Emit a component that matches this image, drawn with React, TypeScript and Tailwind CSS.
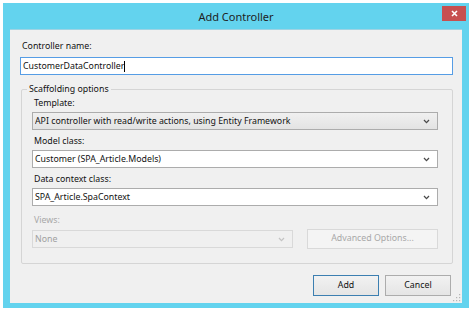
import React from 'react';

const font = { fontFamily: '"Noto Sans", "Open Sans", sans-serif' };

function Chevron({ disabled }: { disabled?: boolean }) {
  return (
    <svg width="7" height="5" viewBox="0 0 7 5" className="shrink-0">
      <path
        d="M1 1 L3.5 3.6 L6 1"
        fill="none"
        stroke={disabled ? '#c4c4c4' : '#4a4a4a'}
        strokeWidth="1.3"
      />
    </svg>
  );
}

function Select({
  value,
  variant = 'white',
  className = '',
}: {
  value: string;
  variant?: 'white' | 'gray' | 'disabled';
  className?: string;
}) {
  const box =
    variant === 'white'
      ? 'bg-white border-[#acacac] text-[#111]'
      : variant === 'gray'
        ? 'bg-gradient-to-b from-[#f0f0f0] to-[#e3e3e3] border-[#acacac] text-[#111]'
        : 'bg-[#f0f0f0] border-[#d9d9d9] text-[#a0a0a0]';
  return (
    <div className={`flex items-center h-[18px] border pl-[2px] pr-[7px] ${box} ${className}`}>
      <span className="flex-1 text-[8.8px] leading-[16px] truncate">{value}</span>
      <Chevron disabled={variant === 'disabled'} />
    </div>
  );
}

function Field({
  label,
  children,
  disabled,
  className = '',
}: {
  label: string;
  children: React.ReactNode;
  disabled?: boolean;
  className?: string;
}) {
  return (
    <div className={`flex flex-col ${className}`}>
      <div className={`h-[16px] text-[8.8px] leading-[16px] pl-[2px] ${disabled ? 'text-[#a8a8a8]' : 'text-[#111]'}`}>
        {label}
      </div>
      <div className="mt-[1px]">{children}</div>
    </div>
  );
}

export default function App() {
  return (
    <div className="w-[474px] h-[313px] bg-white pt-[3px] pl-[3px]" style={font}>
      <div className="w-[466px] h-[305px] bg-[#63d3ee] flex flex-col">
        {/* title bar */}
        <div className="relative h-[26px] flex items-center justify-center">
          <span className="text-[11px] text-[#1e1e1e] leading-[16px] mt-[2px]">Add Controller</span>
          <div className="absolute right-[3px] top-[3px] w-[24px] h-[15px] bg-[#c75050] flex items-center justify-center">
            <svg width="7" height="7" viewBox="0 0 7 7">
              <path d="M1 1 L6 6 M6 1 L1 6" stroke="white" strokeWidth="1.6" />
            </svg>
          </div>
        </div>

        {/* content */}
        <div className="relative flex-1 mx-[7px] mb-[5px] bg-[#f0f0f0] border-t border-[#9fd3e3] flex flex-col">
          <div className="pl-[12px] pt-[8px] h-[16px] box-content text-[8.8px] leading-[16px] text-[#111]">
            Controller name:
          </div>
          <div className="ml-[10px] mt-[3px] w-[433px] h-[18px] bg-white border border-[#569de5] flex items-center pl-[2px]">
            <span className="text-[8.8px] leading-[16px] text-[#111]">CustomerDataController</span>
            <span className="w-px h-[11px] bg-black" />
          </div>

          {/* group box */}
          <div className="relative ml-[11px] mt-[14px] w-[432px] h-[175px] border border-[#d5d5d5] rounded-[2px]">
            <span className="absolute -top-[9px] left-[5px] px-[2px] bg-[#f0f0f0] text-[8.8px] leading-[16px] text-[#111]">
              Scaffolding options
            </span>
            <div className="flex flex-col gap-[3px] pl-[10px] pr-[14px] pt-[5px]">
              <Field label="Template:">
                <Select value="API controller with read/write actions, using Entity Framework" variant="gray" />
              </Field>
              <Field label="Model class:">
                <Select value="Customer (SPA_Article.Models)" />
              </Field>
              <Field label="Data context class:">
                <Select value="SPA_Article.SpaContext" />
              </Field>
              <Field label="Views:" disabled className="mt-[3px]">
                <div className="flex items-center gap-[14px]">
                  <Select value="None" variant="disabled" className="w-[261px]" />
                  <div className="w-[131px] h-[20px] border border-[#d9d9d9] bg-[#f4f4f4] flex items-center justify-center text-[8.8px] text-[#a8a8a8]">
                    Advanced Options...
                  </div>
                </div>
              </Field>
            </div>
          </div>

          {/* buttons */}
          <div className="flex justify-end gap-[6px] mr-[11px] mt-[11px]">
            <div className="w-[66px] h-[21px] border border-[#3c7fb1] bg-gradient-to-b from-[#f2f2f2] to-[#e5e5e5] flex items-center justify-center text-[8.8px] text-[#111]">
              Add
            </div>
            <div className="w-[66px] h-[21px] border border-[#acacac] bg-gradient-to-b from-[#f2f2f2] to-[#e5e5e5] flex items-center justify-center text-[8.8px] text-[#111]">
              Cancel
            </div>
          </div>

          {/* resize grip */}
          <svg className="absolute right-[1px] bottom-[1px]" width="8" height="8" viewBox="0 0 8 8">
            <rect x="6" y="0" width="1.2" height="1.2" fill="#b5b5b5" />
            <rect x="3" y="3" width="1.2" height="1.2" fill="#b5b5b5" />
            <rect x="6" y="3" width="1.2" height="1.2" fill="#b5b5b5" />
            <rect x="0" y="6" width="1.2" height="1.2" fill="#b5b5b5" />
            <rect x="3" y="6" width="1.2" height="1.2" fill="#b5b5b5" />
            <rect x="6" y="6" width="1.2" height="1.2" fill="#b5b5b5" />
          </svg>
        </div>
      </div>
    </div>
  );
}
